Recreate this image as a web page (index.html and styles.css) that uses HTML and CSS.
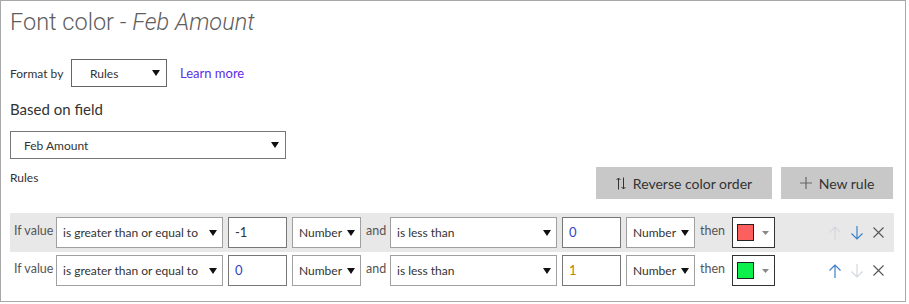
FILE: index.html
```html
<!DOCTYPE html>
<html>
<head>
<meta charset="utf-8">
<link rel="stylesheet" href="styles.css">
</head>
<body>
<div class="panel">
  <h1 class="title">Font color - <em>Feb Amount</em></h1>

  <div class="format-row">
    <span class="label">Format by</span>
    <div class="select sel-rules"><span>Rules</span><svg class="caret" width="8" height="6" viewBox="0 0 8 6"><path d="M0 0H8L4 6Z" fill="#111"/></svg></div>
    <a class="link">Learn more</a>
  </div>

  <div class="subhead">Based on field</div>
  <div class="select sel-field"><span>Feb Amount</span><svg class="caret" width="8" height="6" viewBox="0 0 8 6"><path d="M0 0H8L4 6Z" fill="#111"/></svg></div>

  <div class="rules-head">
    <span class="rules-label">Rules</span>
    <div class="buttons">
      <button class="btn btn-rev"><svg width="10" height="13" viewBox="0 0 10 13"><path d="M2.5 12.5V1M0.5 3L2.5 1L4.5 3M7.5 0.5V12M5.5 10L7.5 12L9.5 10" fill="none" stroke="#333" stroke-width="1"/></svg>Reverse color order</button>
      <button class="btn btn-new"><svg width="12" height="12" viewBox="0 0 12 12"><path d="M6 0V12M0 6H12" fill="none" stroke="#666" stroke-width="1.2"/></svg>New rule</button>
    </div>
  </div>

  <div class="rule active">
    <span class="word w-if">If value</span>
    <div class="select sel-op"><span>is greater than or equal to</span><svg class="caret" width="8" height="6" viewBox="0 0 8 6"><path d="M0 0H8L4 6Z" fill="#111"/></svg></div>
    <div class="input">-1</div>
    <div class="select sel-num"><span>Number</span><svg class="caret" width="8" height="6" viewBox="0 0 8 6"><path d="M0 0H8L4 6Z" fill="#111"/></svg></div>
    <span class="word w-and">and</span>
    <div class="select sel-op2"><span>is less than</span><svg class="caret" width="8" height="6" viewBox="0 0 8 6"><path d="M0 0H8L4 6Z" fill="#111"/></svg></div>
    <div class="input val-blue">0</div>
    <div class="select sel-num"><span>Number</span><svg class="caret" width="8" height="6" viewBox="0 0 8 6"><path d="M0 0H8L4 6Z" fill="#111"/></svg></div>
    <span class="word w-then">then</span>
    <div class="color"><span class="swatch red"></span><svg class="ccaret" width="7" height="4" viewBox="0 0 7 4"><path d="M0 0H7L3.5 4Z" fill="#888"/></svg></div>
    <div class="actions">
      <svg class="ico" width="12" height="14" viewBox="0 0 12 14"><path d="M6 14V1M0.5 6.5L6 1L11.5 6.5" fill="none" stroke="#d4d8de" stroke-width="1.2"/></svg>
      <svg class="ico" width="12" height="14" viewBox="0 0 12 14"><path d="M6 0V13M0.5 7.5L6 13L11.5 7.5" fill="none" stroke="#3d80c8" stroke-width="1.2"/></svg>
      <svg class="ico x" width="11" height="11" viewBox="0 0 11 11"><path d="M0.5 0.5L10.5 10.5M10.5 0.5L0.5 10.5" fill="none" stroke="#555" stroke-width="1.1"/></svg>
    </div>
  </div>

  <div class="rule">
    <span class="word w-if">If value</span>
    <div class="select sel-op"><span>is greater than or equal to</span><svg class="caret" width="8" height="6" viewBox="0 0 8 6"><path d="M0 0H8L4 6Z" fill="#111"/></svg></div>
    <div class="input val-blue">0</div>
    <div class="select sel-num"><span>Number</span><svg class="caret" width="8" height="6" viewBox="0 0 8 6"><path d="M0 0H8L4 6Z" fill="#111"/></svg></div>
    <span class="word w-and">and</span>
    <div class="select sel-op2"><span>is less than</span><svg class="caret" width="8" height="6" viewBox="0 0 8 6"><path d="M0 0H8L4 6Z" fill="#111"/></svg></div>
    <div class="input val-orange">1</div>
    <div class="select sel-num"><span>Number</span><svg class="caret" width="8" height="6" viewBox="0 0 8 6"><path d="M0 0H8L4 6Z" fill="#111"/></svg></div>
    <span class="word w-then">then</span>
    <div class="color"><span class="swatch green"></span><svg class="ccaret" width="7" height="4" viewBox="0 0 7 4"><path d="M0 0H7L3.5 4Z" fill="#888"/></svg></div>
    <div class="actions">
      <svg class="ico" width="12" height="14" viewBox="0 0 12 14"><path d="M6 14V1M0.5 6.5L6 1L11.5 6.5" fill="none" stroke="#3d80c8" stroke-width="1.2"/></svg>
      <svg class="ico" width="12" height="14" viewBox="0 0 12 14"><path d="M6 0V13M0.5 7.5L6 13L11.5 7.5" fill="none" stroke="#d4d8de" stroke-width="1.2"/></svg>
      <svg class="ico x" width="11" height="11" viewBox="0 0 11 11"><path d="M0.5 0.5L10.5 10.5M10.5 0.5L0.5 10.5" fill="none" stroke="#555" stroke-width="1.1"/></svg>
    </div>
  </div>
</div>
</body>
</html>
```

FILE: styles.css
```css
* { box-sizing: border-box; }
html, body { margin: 0; padding: 0; background: #fff; }
body { font-family: Lato, "Open Sans", sans-serif; color: #333; }

.panel {
  width: 906px;
  height: 302px;
  border: 1px solid #a8a8a8;
  padding: 0 12px 0 9px;
}

.title {
  margin: 6px 0 0 0;
  font-family: Roboto, "Open Sans", sans-serif;
  font-size: 23.5px;
  line-height: 30px;
  font-weight: 300;
  color: #5e5e5e;
}
.title em { font-style: italic; }

.format-row {
  display: flex;
  align-items: center;
  margin-top: 22px;
  height: 28px;
  white-space: nowrap;
}
.label { font-size: 12px; color: #333; width: 61px; }

.select {
  display: flex;
  align-items: center;
  justify-content: space-between;
  border: 1px solid #a0a0a0;
  background: #fff;
  font-size: 12px;
  color: #333;
  white-space: nowrap;
}
.sel-rules { width: 96px; height: 28px; padding: 0 6px 0 18px; border-color: #666; }
.caret { flex: none; }
.link { margin-left: 13px; font-size: 13px; color: #5c2ee6; }

.subhead { margin-top: 11px; font-size: 15px; line-height: 22px; color: #333; }
.sel-field { width: 276px; height: 28px; margin-top: 11px; padding: 0 6px 0 13px; border-color: #777; }

.rules-head {
  display: flex;
  justify-content: space-between;
  align-items: flex-start;
  margin-top: 8px;
  height: 46px;
}
.rules-label { font-size: 12px; line-height: 18px; margin-top: 2px; }
.buttons { display: flex; gap: 9px; margin-top: 0; }
.btn {
  display: flex;
  align-items: center;
  justify-content: center;
  gap: 7px;
  height: 32px;
  border: none;
  background: #c8c8c8;
  font-family: inherit;
  font-size: 14px;
  color: #333;
}
.btn-rev { width: 176px; }
.btn-new { width: 112px; }

.rule {
  display: flex;
  align-items: flex-start;
  height: 39px;
  padding: 4px 0 0 4px;
  width: 884px;
  white-space: nowrap;
}
.rule.active { background: #e8e8e8; }
.rule + .rule { padding-top: 3px; }

.word { font-size: 12.5px; color: #555; line-height: 18px; margin-top: 5px; }
.w-if { width: 42px; }
.w-and { width: 24px; margin-left: 5px; }
.w-then { width: 32px; margin-left: 5px; }

.rule .select { height: 31px; padding: 0 5px 0 6px; font-size: 12px; }
.sel-op { width: 167px; }
.sel-op2 { width: 167px; }
.sel-num { width: 69px; margin-left: 5px; }
.input {
  width: 59px; height: 31px; margin-left: 5px;
  border: 1px solid #777; background: #fff;
  font-size: 13px; line-height: 29px; padding-left: 6px; color: #333;
}
.val-blue { color: #3344cc; }
.val-orange { color: #c08000; }

.color {
  width: 43px; height: 31px;
  border: 1px solid #333;
  background: #fff;
  display: flex; align-items: center;
  padding-left: 4px;
}
.swatch { width: 17px; height: 17px; border: 1px solid #222; }
.swatch.red { background: #fd5e5e; }
.swatch.green { background: #0df04c; }
.ccaret { margin-left: 8px; }

.actions {
  margin-left: auto;
  display: flex;
  align-items: center;
  gap: 10px;
  height: 31px;
  padding-right: 10px;
}
```
